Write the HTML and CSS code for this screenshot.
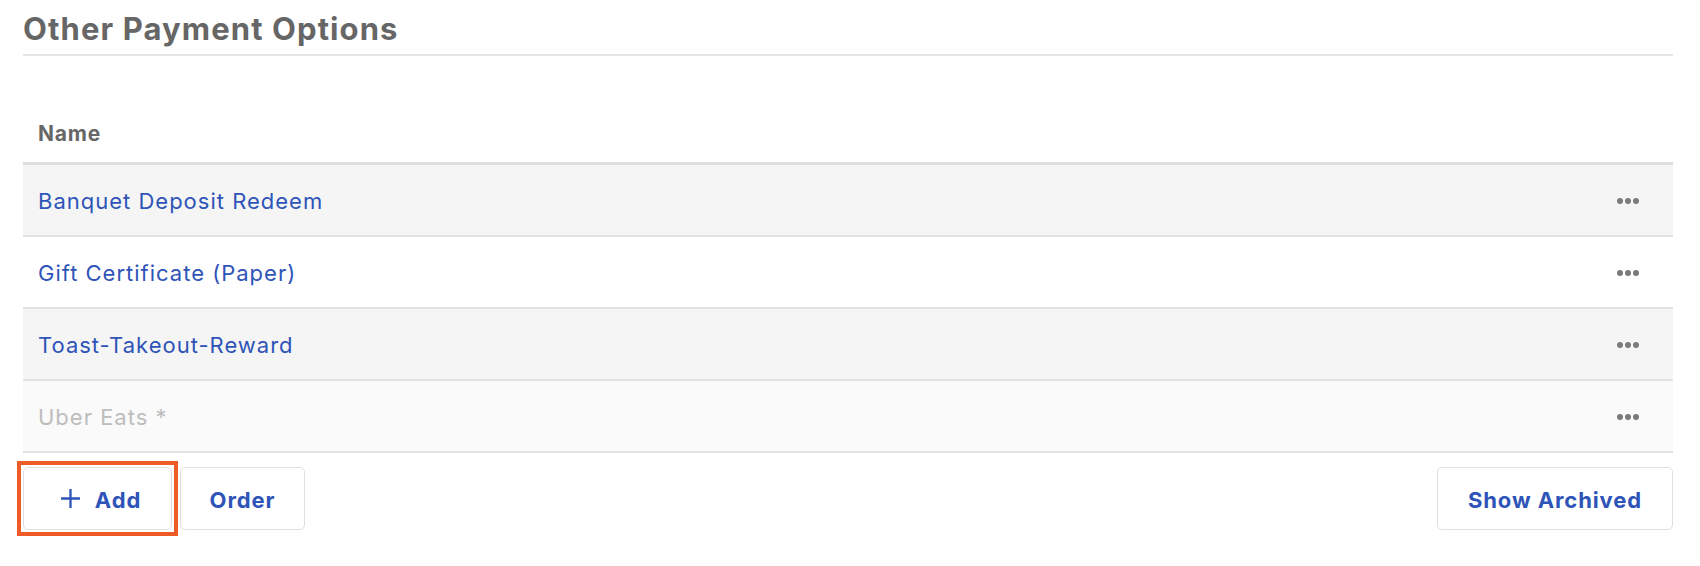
FILE: index.html
```html
<!DOCTYPE html>
<html lang="en">
<head>
<meta charset="utf-8">
<title>Other Payment Options</title>
<link rel="stylesheet" href="styles.css">
</head>
<body>
<section class="panel">
  <h2 class="panel-title">Other Payment Options</h2>
  <div class="table">
    <div class="table-head">Name</div>
    <div class="row row-shaded">
      <a class="row-name" href="#">Banquet Deposit Redeem</a>
      <span class="row-more"><i></i><i></i><i></i></span>
    </div>
    <div class="row">
      <a class="row-name" href="#">Gift Certificate (Paper)</a>
      <span class="row-more"><i></i><i></i><i></i></span>
    </div>
    <div class="row row-shaded">
      <a class="row-name" href="#">Toast-Takeout-Reward</a>
      <span class="row-more"><i></i><i></i><i></i></span>
    </div>
    <div class="row row-archived">
      <span class="row-name">Uber Eats *</span>
      <span class="row-more"><i></i><i></i><i></i></span>
    </div>
  </div>
  <div class="actions">
    <div class="actions-left">
      <div class="focus-ring">
        <button class="btn btn-add" type="button">
          <svg class="btn-icon" viewBox="0 0 20 20" width="20" height="20" aria-hidden="true"><path d="M10 1v18M1 10h18" stroke="currentColor" stroke-width="2.2" fill="none"/></svg>
          <span>Add</span>
        </button>
      </div>
      <button class="btn btn-order" type="button">Order</button>
    </div>
    <button class="btn btn-archived" type="button">Show Archived</button>
  </div>
</section>
</body>
</html>
```
FILE: styles.css
```css
* { box-sizing: border-box; }
html, body { margin: 0; background: #fff; }
body {
  font-family: Inter, "Noto Sans", "Liberation Sans", sans-serif;
  color: #666;
}
.panel {
  padding: 0 27px 0 23px;
}
.panel-title {
  margin: 0;
  padding-top: 10px;
  height: 56px;
  font-size: 31px;
  line-height: 38px;
  letter-spacing: 1.1px;
  font-weight: 700;
  color: #666;
  border-bottom: 2px solid #e6e6e6;
}
.table-head {
  height: 109px;
  padding: 0 15px 16px;
  display: flex;
  align-items: flex-end;
  font-size: 21px;
  letter-spacing: 0.8px;
  font-weight: 700;
  color: #666;
  border-bottom: 3px solid #dedede;
}
.row {
  height: 72px;
  display: flex;
  align-items: center;
  justify-content: space-between;
  padding: 2px 34px 0 15px;
  border-bottom: 2px solid #e2e2e2;
  background: #fff;
}
.row-shaded { background: #f5f5f5; }
.row-archived { background: #fafafa; }
.row-name {
  font-size: 22px;
  letter-spacing: 1px;
  color: #2e54b8;
  text-decoration: none;
}
.row-archived .row-name { color: #bdbdbd; }
.row-more {
  display: flex;
  gap: 2px;
}
.row-more i {
  width: 6px;
  height: 6px;
  border-radius: 50%;
  background: #7a7a7a;
}
.actions {
  display: flex;
  justify-content: space-between;
  align-items: center;
  padding-top: 8px;
}
.actions-left {
  display: flex;
  align-items: center;
  gap: 2px;
  margin-left: -6px;
}
.focus-ring {
  border: 4px solid #ee5b26;
  padding: 2px;
}
.btn {
  height: 63px;
  background: #fff;
  border: 1px solid #e0e0e0;
  border-radius: 5px;
  font-family: inherit;
  font-size: 22px;
  letter-spacing: 0.9px;
  font-weight: 700;
  color: #2e54b8;
  display: inline-flex;
  align-items: center;
  justify-content: center;
  gap: 14px;
  padding-top: 3px;
  cursor: pointer;
}
.btn-add { width: 149px; padding: 3px 0 0 6px; }
.btn-icon { width: 21px; height: 21px; margin-top: -3px; }
.btn-order { width: 125px; }
.btn-archived { width: 236px; }
```
